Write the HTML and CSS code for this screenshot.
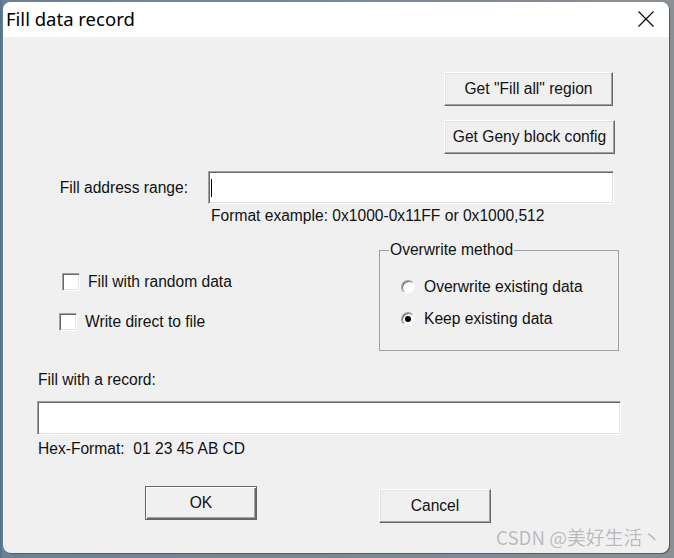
FILE: index.html
```html
<!DOCTYPE html>
<html lang="en">
<head>
<meta charset="utf-8">
<title>Fill data record</title>
<link rel="stylesheet" href="styles.css">
</head>
<body>
<div class="window">
  <div class="titlebar">
    <span class="title">Fill data record</span>
    <svg class="close" width="16" height="16" viewBox="0 0 16 16" aria-hidden="true">
      <path d="M0.5 0.5 L15.5 15.5 M15.5 0.5 L0.5 15.5" stroke="#000" stroke-width="1.1" fill="none"/>
    </svg>
  </div>
  <div class="content">
    <div class="top-buttons">
      <button class="btn btn-fill">Get "Fill all" region</button>
      <button class="btn btn-geny">Get Geny block config</button>
    </div>

    <div class="addr-row">
      <label class="addr-label">Fill address range:</label>
      <div class="field field-addr"><span class="caret"></span></div>
    </div>
    <div class="hint hint-addr">Format example: 0x1000-0x11FF or 0x1000,512</div>

    <div class="options">
      <div class="checks">
        <div class="check check-1"><span class="box"></span><span>Fill with random data</span></div>
        <div class="check check-2"><span class="box"></span><span>Write direct to file</span></div>
      </div>
      <fieldset class="group">
        <legend class="legend">Overwrite method</legend>
        <div class="radio"><span class="dot"></span><span>Overwrite existing data</span></div>
        <div class="radio"><span class="dot checked"></span><span>Keep existing data</span></div>
      </fieldset>
    </div>

    <div class="record-label">Fill with a record:</div>
    <div class="field field-record"></div>
    <div class="hint hint-hex">Hex-Format:&nbsp; 01 23 45 AB CD</div>

    <div class="actions">
      <button class="btn btn-ok">OK</button>
      <button class="btn btn-cancel">Cancel</button>
    </div>

    <div class="watermark">CSDN @美好生活丶</div>
  </div>
</div>
</body>
</html>
```

FILE: styles.css
```css
html, body {
  margin: 0;
  padding: 0;
}
body {
  width: 674px;
  height: 558px;
  overflow: hidden;
  background: linear-gradient(90deg, #4f6f8c 0, #6b8196 3px, #8a8f95 100%);
  font-family: "Liberation Sans", Arial, sans-serif;
  font-size: 15.6px;
  color: #111;
}
.window {
  margin: 2px 0 0 3px;
  width: 666px;
  height: 551px;
  border-radius: 8px;
  overflow: hidden;
  background: #f0f0f0;
  box-shadow: 1px 1px 0 #5a5a5a;
  display: flex;
  flex-direction: column;
}
.titlebar {
  height: 35px;
  flex: none;
  background: #fff;
  display: flex;
  align-items: flex-start;
  justify-content: space-between;
}
.title {
  font-family: "Noto Sans", "Open Sans", sans-serif;
  font-size: 18.5px;
  line-height: 24px;
  margin: 5px 0 0 3px;
  color: #000;
}
.close {
  margin: 9px 15px 0 0;
}
.content {
  flex: 1;
  position: relative;
  line-height: 18px;
}
.btn {
  font-family: "Liberation Sans", Arial, sans-serif;
  font-size: 15.6px;
  color: #111;
  background: #f0f0f0;
  height: 34px;
  padding: 0;
  border: 1px solid;
  border-color: #fff #696969 #696969 #fff;
  box-shadow: inset -1px -1px 0 #a0a0a0, inset 1px 1px 0 #e3e3e3;
  display: block;
}
.top-buttons {
  display: flex;
  flex-direction: column;
  align-items: flex-start;
  gap: 14px;
  padding: 35px 0 0 441px;
}
.btn-fill { width: 169px; }
.btn-geny { width: 171px; }

.addr-row {
  display: grid;
  grid-template-columns: 205px 406px;
  align-items: center;
  margin-top: 17px;
}
.addr-label {
  justify-self: end;
  padding-right: 20px;
}
.field {
  background: #fff;
  box-sizing: border-box;
  border: 1px solid;
  border-color: #a0a0a0 #fff #fff #a0a0a0;
  box-shadow: inset 1px 1px 0 #696969, inset -1px -1px 0 #e3e3e3;
}
.field-addr {
  height: 33px;
  display: flex;
  align-items: center;
}
.caret {
  display: block;
  width: 1px;
  height: 18px;
  background: #000;
  margin-left: 2px;
}
.hint-addr {
  margin: 3px 0 0 208px;
}

.options {
  display: flex;
  align-items: flex-start;
  margin-top: 16px;
}
.checks {
  width: 376px;
  flex: none;
  padding-top: 32px;
}
.check {
  display: flex;
  align-items: center;
  gap: 8px;
  height: 18px;
}
.check-1 { margin-left: 59px; }
.check-2 { margin-left: 56px; margin-top: 22px; }
.box {
  width: 18px;
  height: 18px;
  box-sizing: border-box;
  background: #fff;
  border: 1px solid;
  border-color: #a0a0a0 #fff #fff #a0a0a0;
  box-shadow: inset 1px 1px 0 #696969, inset -1px -1px 0 #e3e3e3;
  flex: none;
}
.group {
  margin: 0;
  padding: 0 0 15px 0;
  width: 240px;
  box-sizing: border-box;
  border: 1px solid #a0a0a0;
  min-width: 0;
}
.legend {
  padding: 0 1px 0 1px;
  margin-left: 9px;
  line-height: 18px;
}
.radio {
  display: flex;
  align-items: center;
  gap: 9px;
  height: 32px;
  margin-left: 21px;
}
.radio:first-of-type { margin-top: 12px; }
.dot {
  width: 14px;
  height: 14px;
  box-sizing: border-box;
  border-radius: 50%;
  background: #fff;
  border: 1px solid;
  border-color: #a0a0a0 #f4f4f4 #f4f4f4 #a0a0a0;
  box-shadow: inset 1px 1px 0 #696969;
  display: flex;
  align-items: center;
  justify-content: center;
  flex: none;
}
.dot.checked::after {
  content: "";
  width: 6px;
  height: 6px;
  border-radius: 50%;
  background: #000;
}

.record-label {
  margin: 20px 0 0 35px;
}
.field-record {
  height: 34px;
  width: 584px;
  margin: 12px 0 0 34px;
}
.hint-hex {
  margin: 5px 0 0 35px;
}

.actions {
  display: flex;
  align-items: flex-start;
  margin-top: 28px;
  padding-left: 142px;
}
.btn-ok {
  width: 112px;
  border: 1px solid #646464;
  box-shadow: inset 1px 1px 0 #fff, inset -1px -1px 0 #696969, inset -2px -2px 0 #a0a0a0;
}
.btn-cancel {
  width: 112px;
  margin: 3px 0 0 122px;
}

.watermark {
  position: absolute;
  right: 8px;
  bottom: 4px;
  font-family: "Noto Sans CJK SC", "Noto Sans", sans-serif;
  font-size: 18.8px;
  line-height: 24px;
  color: #b9b9b9;
  text-shadow: 0 0 1px #fff, 0 0 1px #fff;
}
```
